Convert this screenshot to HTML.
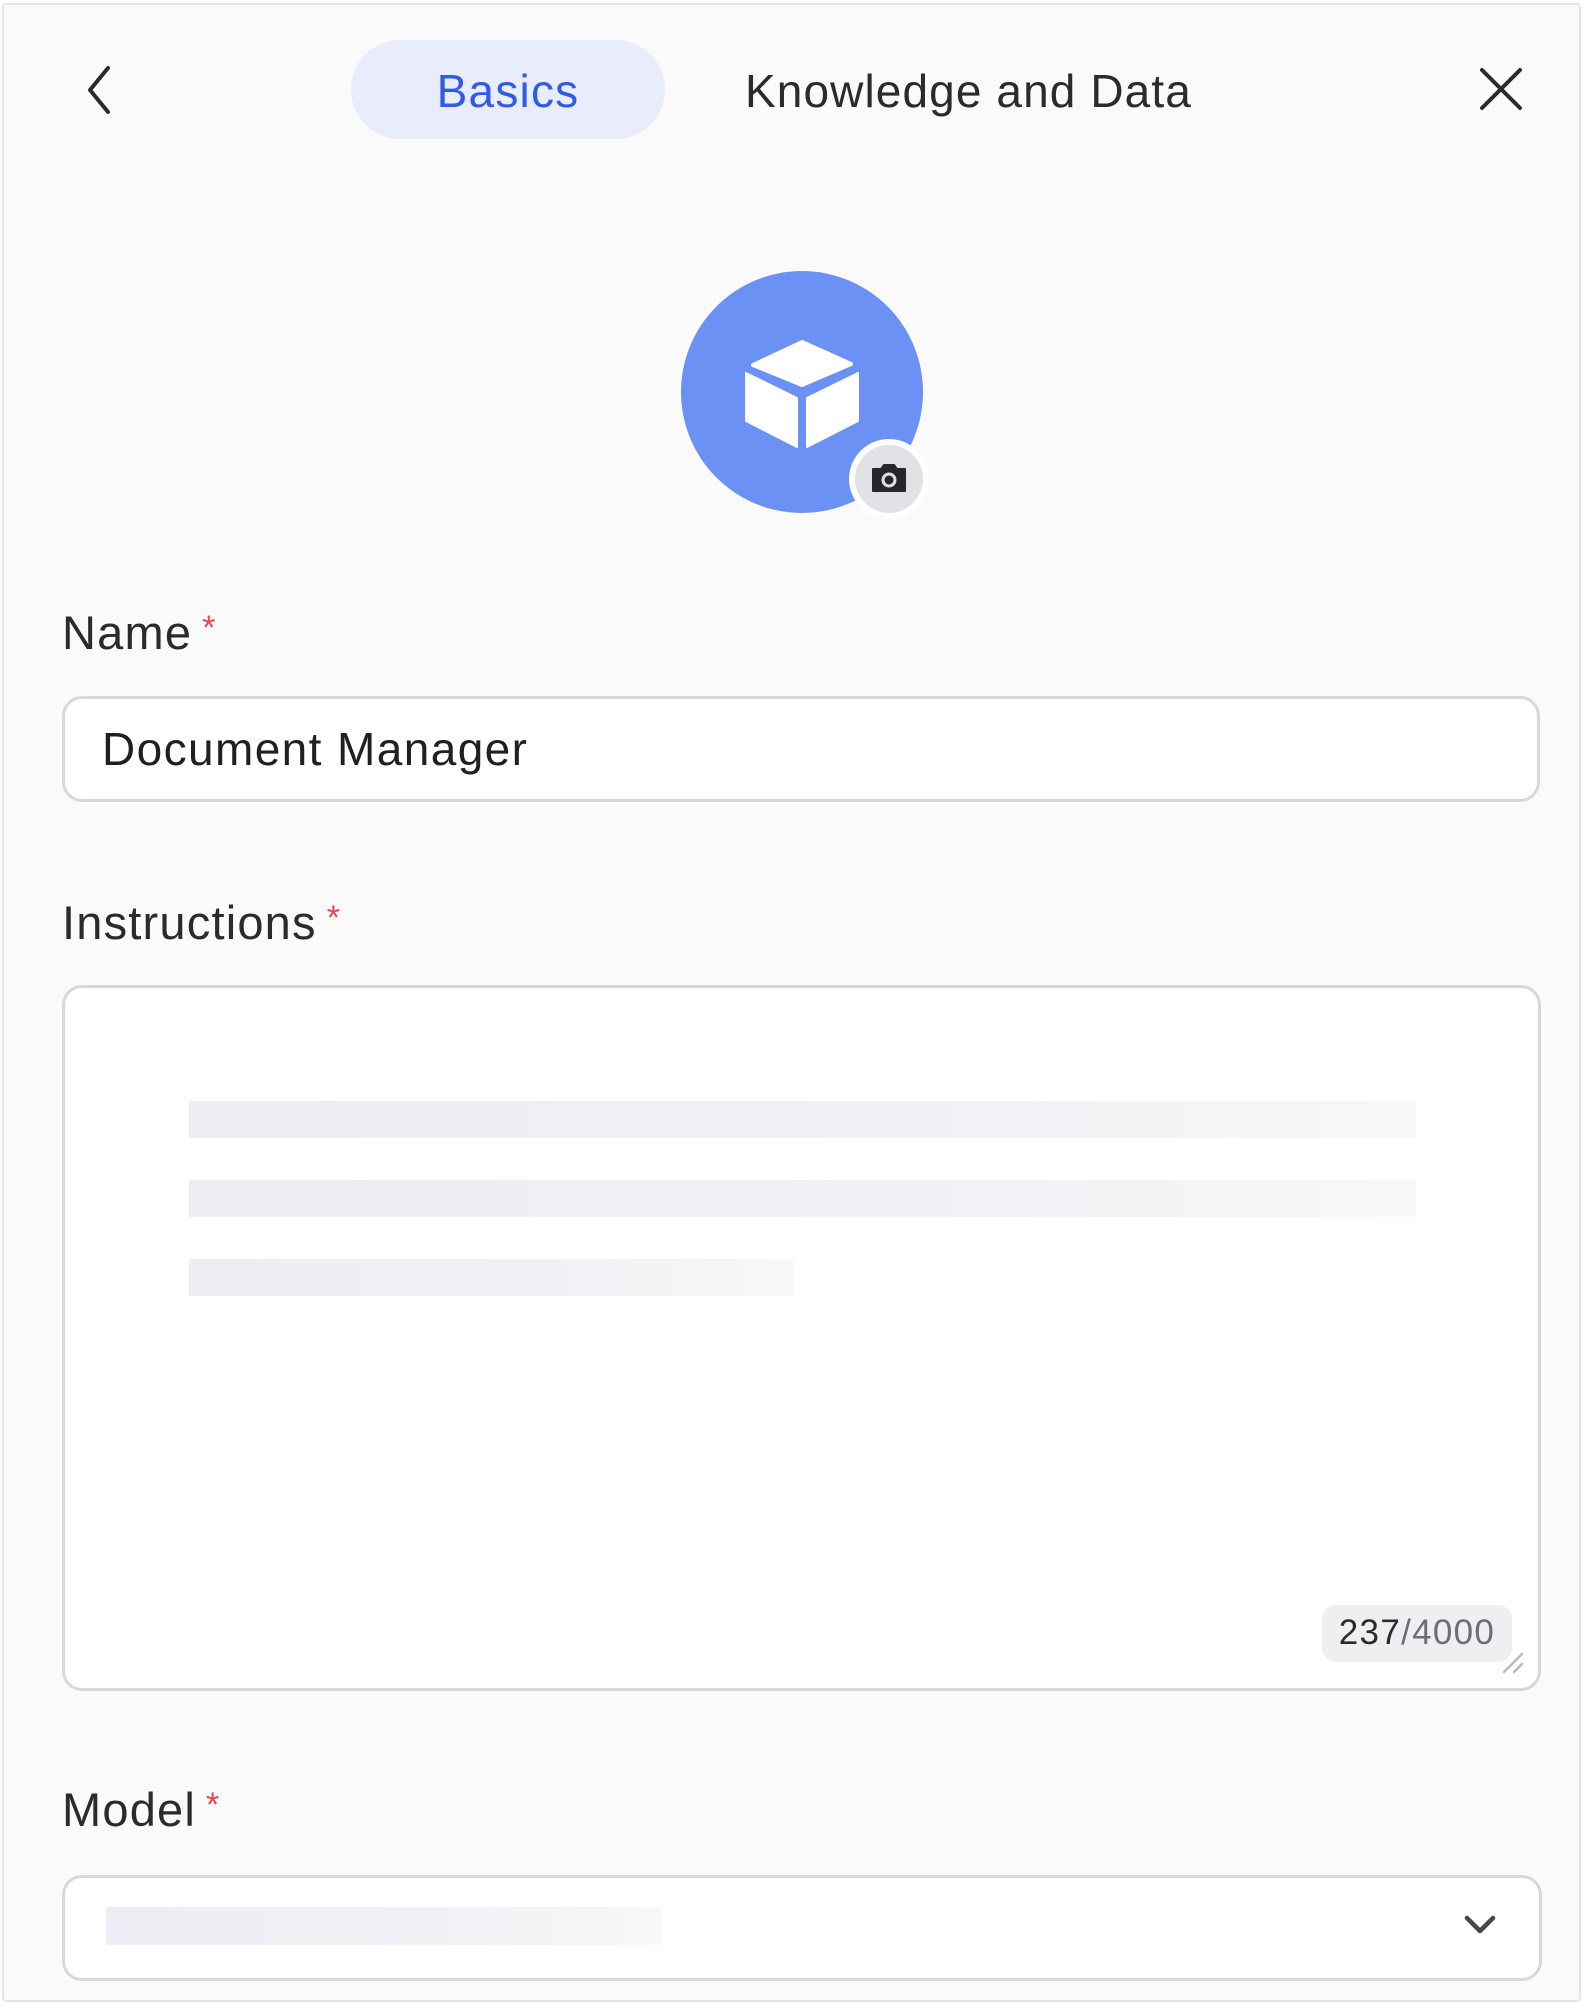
<!DOCTYPE html>
<html><head><meta charset="utf-8"><style>
*{margin:0;padding:0;box-sizing:border-box}
body{width:1584px;height:2005px;background:#fff;font-family:"Liberation Sans",sans-serif;position:relative;overflow:hidden}
.panel{position:absolute;left:2px;top:3px;width:1579px;height:1999px;background:#fafafa;border:2px solid #e6e6e8;border-radius:4px}
.a{position:absolute;white-space:nowrap;line-height:1}
.lbl{font-size:47px;color:#2a2b2f;letter-spacing:1.2px}
.req{color:#e5484d;font-size:34px;vertical-align:top;margin-left:10px;position:relative;top:2px}
.box{position:absolute;background:#fff;border:3px solid #d6d8de;border-radius:20px}
.sk{position:absolute;background:linear-gradient(90deg,#eceef3,#f0f1f5 60%,#f8f8f8)}
</style></head><body>
<div class="panel"></div>
<svg class="a" style="left:80px;top:62px" width="40" height="56" viewBox="0 0 40 56"><path d="M28 6 L10 28 L28 50" fill="none" stroke="#2a2b2f" stroke-width="4" stroke-linecap="round" stroke-linejoin="round"/></svg>
<div class="a" style="left:351px;top:40px;width:314px;height:99px;border-radius:50px;background:#e8ecfb"></div>
<div class="a" style="left:351px;top:68px;width:314px;text-align:center;font-size:46px;color:#2f5be6;letter-spacing:1.2px">Basics</div>
<div class="a" style="left:745px;top:68px;font-size:46px;color:#2a2b2f;letter-spacing:1.1px">Knowledge and Data</div>
<svg class="a" style="left:1478px;top:66px" width="46" height="46" viewBox="0 0 46 46"><path d="M4 4 L42 42 M42 4 L4 42" stroke="#2a2b2f" stroke-width="4" stroke-linecap="round"/></svg>
<svg class="a" style="left:660px;top:260px" width="280" height="280" viewBox="660 260 280 280">
<circle cx="802" cy="392" r="121" fill="#6b91f5"/>
<path d="M802 342 L851 364 L802 385 L753 365 Z" fill="#fff" stroke="#fff" stroke-width="4" stroke-linejoin="round"/>
<path d="M746 373 L797 398 L797 447 L746 421 Z" fill="#fff" stroke="#fff" stroke-width="2" stroke-linejoin="round"/>
<path d="M807 398 L858 373 L858 421 L807 447 Z" fill="#fff" stroke="#fff" stroke-width="2" stroke-linejoin="round"/>
<circle cx="889" cy="479" r="40" fill="#fff"/>
<circle cx="889" cy="479" r="34" fill="#e1e2e6"/>
<path d="M873 469 h8 l3 -4 h10 l3 4 h8 v22 h-32 Z" fill="#26272b" stroke="#26272b" stroke-width="2" stroke-linejoin="round"/>
<circle cx="889" cy="480" r="6" fill="none" stroke="#e1e2e6" stroke-width="3"/>
</svg>
<div class="a lbl" style="left:62px;top:609px">Name<span class="req">*</span></div>
<div class="box" style="left:62px;top:696px;width:1478px;height:106px"></div>
<div class="a" style="left:102px;top:726px;font-size:46px;color:#1f2024;letter-spacing:1.4px">Document Manager</div>
<div class="a lbl" style="left:62px;top:899px">Instructions<span class="req">*</span></div>
<div class="box" style="left:62px;top:985px;width:1479px;height:706px"></div>
<div class="sk" style="left:189px;top:1101px;width:1227px;height:37px"></div>
<div class="sk" style="left:189px;top:1180px;width:1227px;height:37px"></div>
<div class="sk" style="left:189px;top:1259px;width:604px;height:37px"></div>
<div class="a" style="left:1322px;top:1605px;width:190px;height:57px;border-radius:14px;background:#eeeff1"></div>
<div class="a" style="left:1322px;top:1615px;width:190px;text-align:center;font-size:35px;color:#2a2b2f;letter-spacing:1.3px">237<span style="color:#6b6e76">/4000</span></div>
<svg class="a" style="left:1500px;top:1650px" width="26" height="26" viewBox="0 0 26 26"><path d="M4 22 L22 4 M14 22 L22 14" stroke="#b8bac0" stroke-width="2.5" stroke-linecap="round"/></svg>
<div class="a lbl" style="left:62px;top:1786px">Model<span class="req">*</span></div>
<div class="box" style="left:62px;top:1875px;width:1480px;height:106px"></div>
<div class="sk" style="left:106px;top:1907px;width:555px;height:38px"></div>
<svg class="a" style="left:1462px;top:1910px" width="36" height="28" viewBox="0 0 36 28"><path d="M5 8 L18 21 L31 8" fill="none" stroke="#45474d" stroke-width="4.5" stroke-linecap="round" stroke-linejoin="round"/></svg>
</body></html>
